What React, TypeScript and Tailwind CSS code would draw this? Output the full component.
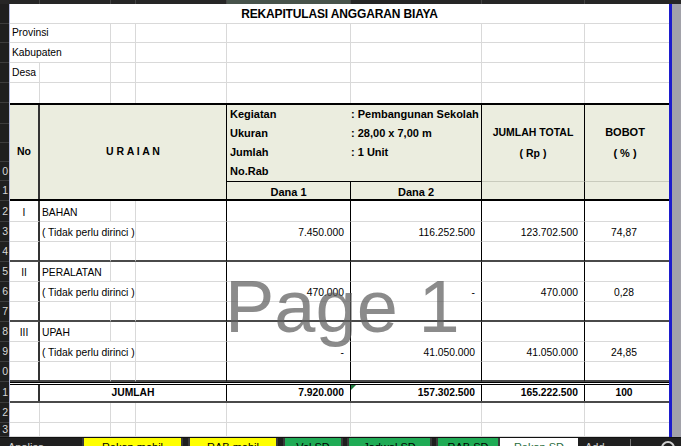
import React from 'react';

const COLS = 'grid grid-cols-[30px_71px_25px_91px_124px_131px_103px_84px]';
const NARROW = "font-['Liberation_Sans_Narrow','Arial_Narrow','Liberation_Sans',sans-serif]";

const rowHeads: [number, string][] = [
  [2, 'h-[20px]'], [3, 'h-[19px]'], [4, 'h-[20px]'], [5, 'h-[20px]'], [6, 'h-[20px]'],
  [7, 'h-[21px]'], [8, 'h-[19px]'], [9, 'h-[19px]'], [10, 'h-[19px]'], [11, 'h-[20px]'],
  [12, 'h-[21px]'], [13, 'h-[20px]'], [14, 'h-[20px]'],
  [15, 'h-[20px]'], [16, 'h-[20px]'], [17, 'h-[20px]'],
  [18, 'h-[20px]'], [19, 'h-[20px]'], [20, 'h-[20px]'],
  [21, 'h-[21px]'], [22, 'h-[20px]'], [23, 'h-[14px]'],
];

function InfoRow({ label, wide, h, noBottom }: { label?: string; wide?: boolean; h: string; noBottom?: boolean }) {
  const bb = noBottom ? '' : 'border-b border-b-[#d9d9d9]';
  const cell = `${bb} border-r border-r-[#d9d9d9]`;
  return (
    <div className={`${COLS} ${h} text-[10.3px]`}>
      {wide ? (
        <div className={`${bb} col-span-2 border-r border-r-[#d9d9d9] pl-[2px] pb-[2px] flex items-end whitespace-nowrap`}>{label}</div>
      ) : (
        <>
          <div className={`${cell} pl-[2px] pb-[2px] flex items-end`}>{label}</div>
          <div className={cell} />
        </>
      )}
      <div className={cell} />
      <div className={cell} />
      <div className={cell} />
      <div className={cell} />
      <div className={cell} />
      <div className={bb} />
    </div>
  );
}

function DataRow({
  no, label, d1, d2, total, bobot, h, last, span,
}: {
  no?: string; label?: string; d1?: string; d2?: string; total?: string; bobot?: string;
  h: string; last?: boolean; span?: boolean;
}) {
  const bb = last ? 'border-b-2 border-b-[#4a4a4a]' : 'border-b border-b-[#d9d9d9]';
  const num = 'flex items-end pb-[1px] justify-end pr-[6px]';
  return (
    <div className={`${COLS} ${h} text-[10.3px]`}>
      <div className={`${bb} border-r-2 border-r-[#333] flex items-end pb-[1px] justify-center`}>{no}</div>
      {span ? (
        <div className={`${bb} col-span-2 border-r border-r-[#d9d9d9] pl-[2px] pb-[1px] flex items-end whitespace-nowrap`}>{label}</div>
      ) : (
        <>
          <div className={`${bb} border-r border-r-[#d9d9d9] pl-[2px] pb-[1px] flex items-end whitespace-nowrap`}>{label}</div>
          <div className={`${bb} border-r border-r-[#d9d9d9]`} />
        </>
      )}
      <div className={`${bb} border-r border-r-black`} />
      <div className={`${bb} border-r border-r-black ${num}`}>{d1}</div>
      <div className={`${bb} border-r border-r-black ${num}`}>{d2}</div>
      <div className={`${bb} border-r border-r-black ${num}`}>{total}</div>
      <div className={`${bb} flex items-end pb-[1px] justify-center pr-[6px]`}>{bobot}</div>
    </div>
  );
}

function BlankRow({ h }: { h: string }) {
  const cell = 'border-b border-b-[#d9d9d9] border-r border-r-[#d9d9d9]';
  return (
    <div className={`${COLS} ${h}`}>
      <div className={cell} />
      <div className={cell} />
      <div className={cell} />
      <div className={cell} />
      <div className={cell} />
      <div className={cell} />
      <div className={cell} />
      <div className="border-b border-b-[#d9d9d9]" />
    </div>
  );
}

function Header() {
  return (
    <div className={`${COLS} grid-rows-[19px_19px_19px_20px_17px] bg-[#ebeddf] border-y-2 border-y-black font-bold text-[10.5px]`}>
      <div className="col-start-1 row-start-1 row-span-5 border-r-2 border-r-[#333] flex items-center justify-center">No</div>
      <div className="col-start-2 col-span-3 row-start-1 row-span-5 border-r border-r-black flex items-center justify-center">U R A I A N</div>
      <div className={`col-start-5 col-span-2 row-start-1 row-span-4 border-r border-r-black border-b border-b-black grid grid-cols-[124px_131px] grid-rows-[19px_19px_19px_19px] text-[11px] ${NARROW}`}>
        <div className="pl-[3px] flex items-center">Kegiatan</div>
        <div className="flex items-center whitespace-nowrap">: Pembangunan Sekolah</div>
        <div className="pl-[3px] flex items-center">Ukuran</div>
        <div className="flex items-center">: 28,00 x 7,00 m</div>
        <div className="pl-[3px] flex items-center">Jumlah</div>
        <div className="flex items-center">: 1 Unit</div>
        <div className="pl-[3px] flex items-center">No.Rab</div>
        <div />
      </div>
      <div className="col-start-7 row-start-1 row-span-4 border-r border-r-black border-b border-b-[#c9cbbd] flex flex-col items-center justify-center leading-[21px]">
        <span>JUMLAH TOTAL</span>
        <span>( Rp )</span>
      </div>
      <div className={`col-start-8 row-start-1 row-span-4 border-b border-b-[#c9cbbd] flex flex-col items-center justify-center leading-[21px] pr-[4px] text-[11px] ${NARROW}`}>
        <span>BOBOT</span>
        <span>( % )</span>
      </div>
      <div className={`col-start-5 row-start-5 border-r border-r-black flex items-center justify-center pt-[3px] text-[11px] ${NARROW}`}>Dana 1</div>
      <div className={`col-start-6 row-start-5 border-r border-r-black flex items-center justify-center pt-[3px] text-[11px] ${NARROW}`}>Dana 2</div>
      <div className="col-start-7 row-start-5 border-r border-r-black" />
      <div className="col-start-8 row-start-5" />
    </div>
  );
}

export default function App() {
  return (
    <div className="w-[681px] h-[446px] overflow-hidden flex flex-col bg-white text-black font-['Liberation_Sans',Arial,sans-serif]">
      {/* column header strip (cut off) */}
      <div className="flex h-[4px] bg-[#262626]">
        <div className="w-[40px] border-r border-r-[#444]" />
        <div className="w-[71px] border-r border-r-[#444]" />
        <div className="w-[25px] border-r border-r-[#444]" />
        <div className="w-[91px] border-r border-r-[#444]" />
        <div className="w-[124px] bg-[#47534b] border-r border-r-[#444]" />
        <div className="w-[131px] border-r border-r-[#444]" />
        <div className="w-[103px] border-r border-r-[#444]" />
        <div className="flex-1" />
      </div>

      <div className="relative flex h-[433px]">
        {/* row headers */}
        <div className="w-[9px] bg-[#1f1f1f] flex flex-col">
          {rowHeads.map(([n, h]) => (
            <div key={n} className={`${h} border-b border-b-[#3d3d3d] flex items-center justify-end pr-[1px] text-[10.5px] text-[#d6d6d6] leading-none`}>
              {n >= 10 ? String(n % 10) : ''}
            </div>
          ))}
        </div>
        <div className="w-px bg-[#b3badf]" />

        {/* sheet */}
        <div className="w-[659px] flex flex-col bg-white">
          <div className="h-[20px] border-b border-b-[#d9d9d9] flex items-center justify-center text-[12px] font-bold tracking-[-0.15px]">
            REKAPITULASI ANGGARAN BIAYA
          </div>
          <InfoRow label="Provinsi" wide h="h-[19px]" />
          <InfoRow label="Kabupaten" wide h="h-[20px]" />
          <InfoRow label="Desa" h="h-[20px]" />
          <InfoRow h="h-[20px]" noBottom />

          <Header />

          <DataRow no="I" label="BAHAN" h="h-[21px]" />
          <DataRow label="( Tidak perlu dirinci )" span d1="7.450.000" d2="116.252.500" total="123.702.500" bobot="74,87" h="h-[20px]" />
          <DataRow h="h-[20px]" last />

          <DataRow no="II" label="PERALATAN" h="h-[20px]" />
          <DataRow label="( Tidak perlu dirinci )" span d1="470.000" d2="-" total="470.000" bobot="0,28" h="h-[20px]" />
          <DataRow h="h-[20px]" last />

          <DataRow no="III" label="UPAH" h="h-[20px]" />
          <DataRow label="( Tidak perlu dirinci )" span d1="-" d2="41.050.000" total="41.050.000" bobot="24,85" h="h-[20px]" />
          <DataRow h="h-[20px]" last />

          {/* total row, double top rule */}
          <div className="border-t border-t-black pt-px">
            <div className={`${COLS} h-[19px] border-t border-t-black border-b-2 border-b-[#4a4a4a] font-bold text-[10.3px]`}>
              <div className="border-r-2 border-r-[#333]" />
              <div className="col-span-3 border-r border-r-black flex items-center justify-center">JUMLAH</div>
              <div className="border-r border-r-black flex items-center justify-end pr-[6px]">7.920.000</div>
              <div className="relative border-r border-r-black flex items-center justify-end pr-[6px]">
                <span className="absolute left-0 top-0 w-0 h-0 border-t-[5px] border-t-[#1e7a3e] border-r-[5px] border-r-transparent" />
                157.302.500
              </div>
              <div className="border-r border-r-black flex items-center justify-end pr-[6px]">165.222.500</div>
              <div className="flex items-center justify-center pr-[6px]">100</div>
            </div>
          </div>

          <BlankRow h="h-[20px]" />
          <BlankRow h="h-[14px]" />
        </div>

        {/* page break border */}
        <div className="w-[3px] bg-[#1d1dcc]" />
        <div className="flex-1 bg-[#a2a2aa]" />

        {/* page watermark */}
        <div className="pointer-events-none absolute left-[225px] top-[266px] text-[74px] leading-[74px] whitespace-nowrap text-[#5a5a5a]/70">
          Page 1
        </div>
      </div>

      {/* sheet tabs (cut off) */}
      <div className="flex h-[9px] overflow-hidden bg-[#1f1f1f] border-t border-t-[#111] text-[11px] leading-none">
        <div className="w-[82px] shrink-0 pl-[8px] pt-[4px] text-[#d0d0d0]">Analisa</div>
        <div className="w-[101px] shrink-0 h-[14px] bg-[#ffff00] border-x-2 border-x-[#3a3a3a] pt-[4px] text-center">Rekap mobil</div>
        <div className="ml-[5px] w-[90px] shrink-0 h-[14px] bg-[#ffff00] border-x-2 border-x-[#3a3a3a] pt-[4px] text-center">RAB mobil</div>
        <div className="ml-[5px] w-[60px] shrink-0 h-[14px] bg-[#1fab55] border-x-2 border-x-[#3a3a3a] pt-[4px] text-center">Vol SD</div>
        <div className="ml-[4px] w-[85px] shrink-0 h-[14px] bg-[#1fab55] border-x-2 border-x-[#3a3a3a] pt-[4px] text-center">Jadwal SD</div>
        <div className="ml-[4px] w-[64px] shrink-0 h-[14px] bg-[#1fab55] border-x-2 border-x-[#3a3a3a] pt-[4px] text-center">RAB SD</div>
        <div className="w-[78px] shrink-0 h-[14px] bg-white pt-[4px] text-center text-[#1f6b3a]">Rekap SD</div>
        <div className="w-[52px] shrink-0 pt-[4px] pl-[7px] text-[#d0d0d0]">Add</div>
        <div className="w-px h-[8px] mt-[1px] bg-[#777] shrink-0" />
        <div className="ml-[30px] mt-[3px] w-[14px] h-[14px] shrink-0 rounded-full border-2 border-[#cfcfcf]" />
      </div>
    </div>
  );
}
